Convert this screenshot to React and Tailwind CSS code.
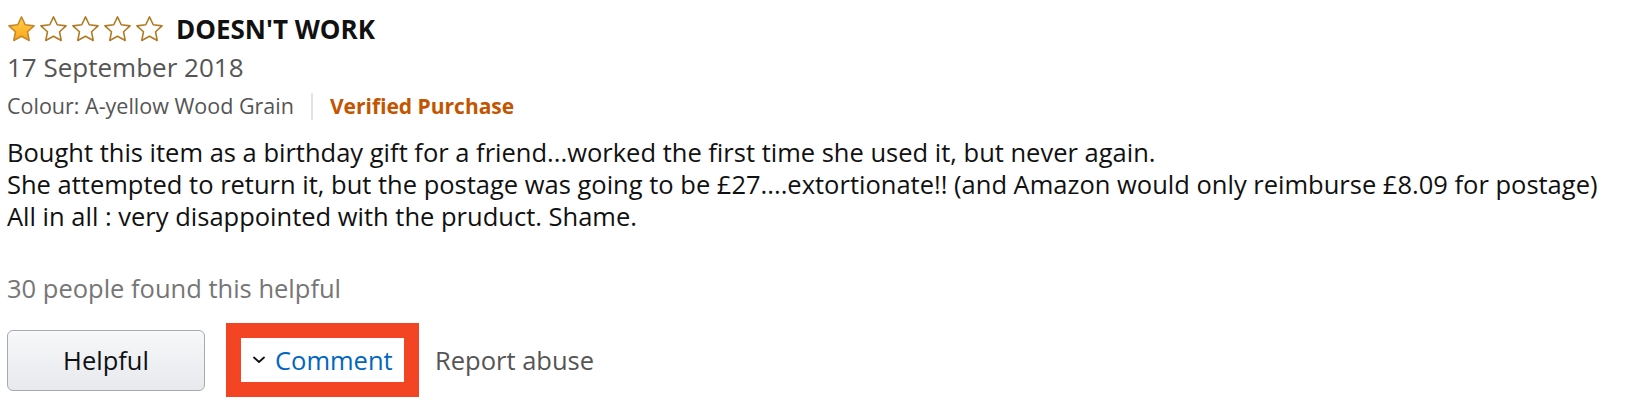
import React from 'react';

const Star = ({ filled }) => (
    <svg width="29" height="28" viewBox="0 0 24 23" className="shrink-0">
        <defs>
            <linearGradient id="starFill" x1="0" y1="0" x2="0" y2="1">
                <stop offset="0%" stopColor="#ffd24a" />
                <stop offset="100%" stopColor="#ffa41c" />
            </linearGradient>
        </defs>
        <polygon
            points="12,1.5 15.1,8 22.4,8.9 17,13.8 18.4,21 12,17.5 5.6,21 7,13.8 1.6,8.9 8.9,8"
            fill={filled ? 'url(#starFill)' : '#ffffff'}
            stroke={filled ? '#c28a2c' : '#b07b22'}
            strokeWidth="1.3"
            strokeLinejoin="round"
        />
    </svg>
);

const ChevronDown = () => (
    <svg width="14" height="8" viewBox="0 0 14 8" className="shrink-0">
        <path d="M2 1.5 L7 6 L12 1.5" fill="none" stroke="#111" strokeWidth="1.8" strokeLinecap="round" strokeLinejoin="round" />
    </svg>
);

export default function App() {
    return (
        <div className="bg-white w-[1632px] h-[406px] overflow-hidden pl-[7px] pt-[13px] font-['Open_Sans',sans-serif]">
            {/* Rating + title */}
            <div className="flex items-center h-[32px]">
                <div className="flex items-center gap-[3px]">
                    <Star filled />
                    <Star />
                    <Star />
                    <Star />
                    <Star />
                </div>
                <h3 className="ml-[12px] text-[26px] leading-[32px] font-bold text-[#111]">DOESN'T WORK</h3>
            </div>

            {/* Date */}
            <div className="mt-[6px] text-[26px] leading-[32px] text-[#555]">17 September 2018</div>

            {/* Variant + verified */}
            <div className="mt-[7px] flex items-center leading-[32px]">
                <span className="text-[21.5px] text-[#555]">Colour: A-yellow Wood Grain</span>
                <span className="mx-[17px] w-[2px] h-[27px] bg-[#e3e3e3]" />
                <span className="text-[21px] font-bold text-[#c45500]">Verified Purchase</span>
            </div>

            {/* Body */}
            <p className="mt-[14px] text-[25.5px] leading-[32px] text-[#111] whitespace-nowrap">
                Bought this item as a birthday gift for a friend...worked the first time she used it, but never again.
                <br />
                She attempted to return it, but the postage was going to be £27....extortionate!! (and Amazon would only reimburse £8.09 for postage)
                <br />
                All in all : very disappointed with the pruduct. Shame.
            </p>

            {/* Helpful count */}
            <div className="mt-[40px] text-[25.5px] leading-[32px] text-[#767676]">30 people found this helpful</div>

            {/* Actions */}
            <div className="mt-[19px] flex items-center">
                <button className="w-[198px] h-[61px] rounded-[6px] border border-[#a6a9ae] bg-gradient-to-b from-[#f7f8fa] to-[#e7e9ec] text-[25.5px] text-[#111] shadow-[inset_0_1px_0_rgba(255,255,255,0.6)]">
                    Helpful
                </button>
                <div className="ml-[21px] border-[15px] border-[#f34423] bg-white w-[193px] h-[74px] flex items-center pl-[11px] gap-[9px]">
                    <ChevronDown />
                    <span className="text-[25.5px] leading-[32px] text-[#0066c0]">Comment</span>
                </div>
                <span className="ml-[16px] text-[25.5px] leading-[32px] text-[#555]">Report abuse</span>
            </div>
        </div>
    );
}
